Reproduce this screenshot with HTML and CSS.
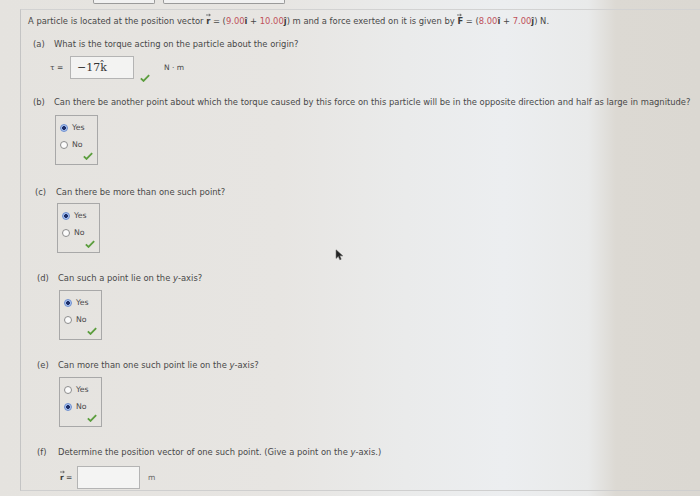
FILE: index.html
```html
<!DOCTYPE html>
<html>
<head>
<meta charset="utf-8">
<link rel="stylesheet" href="styles.css">
</head>
<body>
<div class="tabs"><span class="tab t1"></span><span class="tab t2"></span></div>
<div class="frame">
  <p class="intro">A particle is located at the position vector <span class="vec">r<svg class="arr" viewBox="0 0 6 4" width="5" height="4"><path d="M0 2H5M3.5 0.6L5.2 2L3.5 3.4" fill="none" stroke="#555" stroke-width="0.9"/></svg></span> = (<span class="num">9.00</span><b>î</b> + <span class="num">10.00</span><b>ĵ</b>) m and a force exerted on it is given by <span class="vec">F<svg class="arr" viewBox="0 0 6 4" width="5" height="4"><path d="M0 2H5M3.5 0.6L5.2 2L3.5 3.4" fill="none" stroke="#555" stroke-width="0.9"/></svg></span> = (<span class="num">8.00</span><b>î</b> + <span class="num">7.00</span><b>ĵ</b>) N.</p>

  <div class="part pa">
    <p class="q"><span class="lbl">(a)</span>What is the torque acting on the particle about the origin?</p>
    <div class="ansrow">
      <span class="sym">τ =</span>
      <span class="field"><span class="math">−17k̂</span></span>
      <svg class="check inline" viewBox="0 0 12 9" width="10" height="8"><path d="M1 5L4.2 8L11 1" fill="none" stroke="#5c9e3e" stroke-width="2.2"/></svg>
      <span class="unit">N · m</span>
    </div>
  </div>

  <div class="part pb">
    <p class="q"><span class="lbl">(b)</span>Can there be another point about which the torque caused by this force on this particle will be in the opposite direction and half as large in magnitude?</p>
    <div class="choices">
      <div class="opt"><span class="radio on"></span>Yes</div>
      <div class="opt"><span class="radio"></span>No</div>
      <svg class="check" viewBox="0 0 12 9" width="10" height="8"><path d="M1 5L4.2 8L11 1" fill="none" stroke="#5c9e3e" stroke-width="2.2"/></svg>
    </div>
  </div>

  <div class="part pc">
    <p class="q"><span class="lbl">(c)</span>Can there be more than one such point?</p>
    <div class="choices">
      <div class="opt"><span class="radio on"></span>Yes</div>
      <div class="opt"><span class="radio"></span>No</div>
      <svg class="check" viewBox="0 0 12 9" width="10" height="8"><path d="M1 5L4.2 8L11 1" fill="none" stroke="#5c9e3e" stroke-width="2.2"/></svg>
    </div>
  </div>

  <div class="part pd">
    <p class="q"><span class="lbl">(d)</span>Can such a point lie on the <i>y</i>-axis?</p>
    <div class="choices">
      <div class="opt"><span class="radio on"></span>Yes</div>
      <div class="opt"><span class="radio"></span>No</div>
      <svg class="check" viewBox="0 0 12 9" width="10" height="8"><path d="M1 5L4.2 8L11 1" fill="none" stroke="#5c9e3e" stroke-width="2.2"/></svg>
    </div>
  </div>

  <div class="part pe">
    <p class="q"><span class="lbl">(e)</span>Can more than one such point lie on the <i>y</i>-axis?</p>
    <div class="choices">
      <div class="opt"><span class="radio"></span>Yes</div>
      <div class="opt"><span class="radio on"></span>No</div>
      <svg class="check" viewBox="0 0 12 9" width="10" height="8"><path d="M1 5L4.2 8L11 1" fill="none" stroke="#5c9e3e" stroke-width="2.2"/></svg>
    </div>
  </div>

  <div class="part pf">
    <p class="q"><span class="lbl">(f)</span>Determine the position vector of one such point. (Give a point on the <i>y</i>-axis.)</p>
    <div class="ansrow f">
      <span class="sym"><span class="vec">r<svg class="arr" viewBox="0 0 6 4" width="5" height="4"><path d="M0 2H5M3.5 0.6L5.2 2L3.5 3.4" fill="none" stroke="#555" stroke-width="0.9"/></svg></span> =</span>
      <span class="field empty"></span>
      <span class="unit m">m</span>
    </div>
  </div>
</div>
<svg class="cursor" viewBox="0 0 10 14" width="9" height="12"><path d="M1 1L1 11L3.6 8.6L5.4 12.6L7 11.9L5.3 8L8.8 8Z" fill="#222" stroke="#555" stroke-width="0.6"/></svg>
</body>
</html>
```
FILE: styles.css
```css
html, body {
  margin: 0;
  padding: 0;
}
body {
  width: 700px;
  height: 496px;
  overflow: hidden;
  position: relative;
  font-family: "DejaVu Sans", Verdana, sans-serif;
  font-size: 8.4px;
  color: #484848;
  background: linear-gradient(90deg, #e5e3df 0%, #e7e5e2 40%, #eaebeb 58%, #eceef0 72%, #e9eaea 84%, #dcd9d3 88%, #dbd8d2 100%);
}
p { margin: 0; }
b { font-weight: bold; color: #3c3c3c; }
i { font-style: italic; }

.tabs {
  display: flex;
  gap: 8px;
  padding-left: 93px;
  height: 4px;
}
.tab {
  display: block;
  height: 3px;
  border: 1px solid #9a9a9a;
  border-top: none;
  border-radius: 0 0 2px 2px;
  background: #f1f1f1;
}
.t1 { width: 60px; }
.t2 { width: 120px; }

.frame {
  margin-top: 5px;
  margin-left: 20px;
  height: 482px;
  border-top: 1px solid #d2d2d2;
  border-left: 1px solid #c4c4c4;
  border-bottom: 1px solid #cfcfcf;
  padding-left: 7px;
  box-sizing: border-box;
}
.intro {
  margin-top: 5px;
  line-height: 12px;
  white-space: nowrap;
}
.num { color: #c0505a; }
.vec {
  position: relative;
  font-weight: bold;
  color: #3c3c3c;
}
.arr {
  position: absolute;
  left: 0;
  top: -3px;
}

.part { padding-left: 5px; }
.q {
  line-height: 12px;
  white-space: nowrap;
}
.lbl {
  display: inline-block;
  width: 21px;
}
.pa { margin-top: 11px; }
.pb { margin-top: 17px; }
.pc { margin-top: 21px; padding-left: 7px; }
.pd { margin-top: 19px; padding-left: 9px; }
.pe { margin-top: 19px; padding-left: 9px; }
.pf { margin-top: 19px; padding-left: 9px; }
.pc .choices, .pd .choices, .pe .choices { margin-top: 5px; }
.pd .choices { margin-top: 6px; }
.pe .choices { margin-top: 6px; }

.ansrow {
  display: flex;
  align-items: center;
  margin-top: 6px;
  padding-left: 17px;
  height: 23px;
}
.sym { width: 20px; font-size: 7.5px; }
.field {
  display: flex;
  align-items: center;
  box-sizing: border-box;
  width: 64px;
  height: 23px;
  border: 1px solid #b4b4b4;
  background: #f3f3f2;
  padding-left: 6px;
}
.math {
  font-family: "DejaVu Serif", "Liberation Serif", serif;
  font-size: 11px;
  color: #333;
}
.check.inline {
  align-self: flex-end;
  margin-left: 6px;
  margin-bottom: -3px;
}
.unit { margin-left: 10px; font-size: 7.5px; }
.ansrow.f { padding-left: 23px; margin-top: 8px; }
.ansrow.f .sym { width: 17px; }
.field.empty { width: 63px; background: #f4f4f3; }
.unit.m { margin-left: 8px; color: #666; }

.choices {
  margin-top: 7px;
  margin-left: 22px;
  width: 43px;
  height: 50px;
  box-sizing: border-box;
  border: 1px solid #a8a8a8;
  padding: 3px 0 0 4px;
  display: flex;
  flex-direction: column;
}
.opt {
  display: flex;
  align-items: center;
  height: 17px;
  font-size: 7.8px;
}
.radio {
  width: 8px;
  height: 8px;
  box-sizing: border-box;
  border-radius: 50%;
  border: 1px solid #8d8d8d;
  background: #fbfbfb;
  margin-right: 4px;
}
.radio.on {
  border-color: #6d8fd0;
  background: radial-gradient(circle, #1d2f6a 0 1.6px, #a9c2f0 2.2px);
}
.check {
  align-self: flex-end;
  margin-right: 4px;
  margin-top: -1px;
}

.cursor {
  position: absolute;
  left: 335px;
  top: 249px;
}
```
